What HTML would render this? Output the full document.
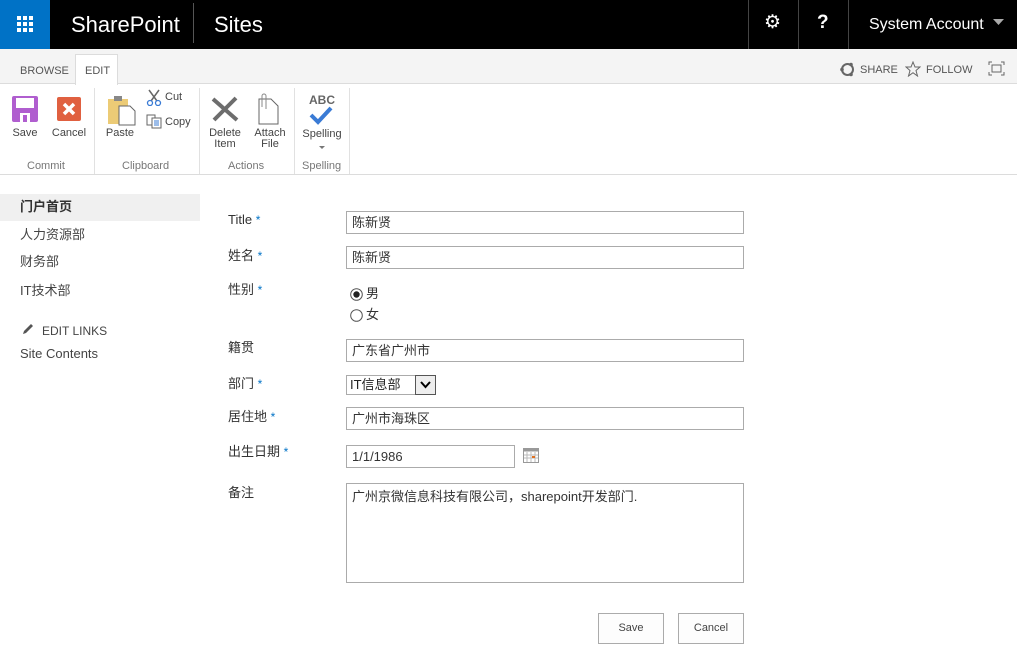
<!DOCTYPE html>
<html><head><meta charset="utf-8"><style>
*{margin:0;padding:0;box-sizing:border-box}
body{width:1017px;height:657px;position:relative;overflow:hidden;background:#fff;font-family:"Liberation Sans","Noto Sans CJK SC",sans-serif;color:#444;font-size:13px}
.a{position:absolute;white-space:nowrap}
.top{position:absolute;left:0;top:0;width:1017px;height:49px;background:#000}
.wf{position:absolute;left:0;top:0;width:50px;height:49px;background:#0072c6}
.vd{position:absolute;top:0;width:1px;height:49px;background:#444}
.lbl{position:absolute;left:228px;font-size:13px;line-height:16px;color:#333}
.lbl b{color:#0072c6;font-weight:normal;font-size:12px}
.inp{position:absolute;left:346px;width:398px;height:23px;border:1px solid #ababab;padding:2px 5px;font-size:13px;line-height:17px;color:#333}
.rl{position:absolute;font-size:11px;color:#444;text-align:center;line-height:11px}
.gl{position:absolute;top:160px;font-size:11px;color:#777}
.sep{position:absolute;top:88px;width:1px;height:86px;background:#e1e1e1}
.btn{position:absolute;top:613px;height:31px;border:1px solid #ababab;background:#fdfdfd;font-size:11px;color:#444;text-align:center;line-height:29px}
.nav{position:absolute;left:20px;font-size:13px;line-height:16px;color:#444}
</style></head><body>
<div class="top"></div>
<div class="wf"></div>
<svg class="a" style="left:17px;top:16px" width="16" height="16"><g fill="#fff">
<rect x="0" y="0" width="4" height="4"/><rect x="6" y="0" width="4" height="4"/><rect x="12" y="0" width="4" height="4"/>
<rect x="0" y="6" width="4" height="4"/><rect x="6" y="6" width="4" height="4"/><rect x="12" y="6" width="4" height="4"/>
<rect x="0" y="12" width="4" height="4"/><rect x="6" y="12" width="4" height="4"/><rect x="12" y="12" width="4" height="4"/></g></svg>
<div class="a" style="left:71px;top:12px;font-size:22px;color:#fff">SharePoint</div>
<div class="a" style="left:193px;top:3px;width:1px;height:40px;background:#555"></div>
<div class="a" style="left:214px;top:12px;font-size:22px;color:#fff">Sites</div>
<div class="vd" style="left:748px"></div><div class="vd" style="left:798px"></div><div class="vd" style="left:848px"></div>
<div class="a" style="left:764px;top:11px;font-size:19px;color:#fff">⚙</div>
<div class="a" style="left:817px;top:12px;font-size:19px;color:#fff;font-weight:bold">?</div>
<div class="a" style="left:869px;top:16px;font-size:16px;color:#fff">System Account</div>
<svg class="a" style="left:993px;top:19px" width="11" height="6"><path d="M0 0H11L5.5 6Z" fill="#aaa"/></svg>

<div class="a" style="left:0;top:49px;width:1017px;height:35px;background:#f4f4f4;border-bottom:1px solid #dcdcdc"></div>
<div class="a" style="left:75px;top:54px;width:43px;height:31px;background:#fff;border:1px solid #dcdcdc;border-bottom:none"></div>
<div class="a" style="left:20px;top:65px;font-size:11px;color:#555">BROWSE</div>
<div class="a" style="left:85px;top:65px;font-size:11px;color:#555">EDIT</div>
<svg class="a" style="left:840px;top:62px" width="15" height="15"><circle cx="7.5" cy="7.5" r="5.5" fill="none" stroke="#666" stroke-width="2"/><circle cx="2" cy="7.5" r="1.8" fill="#666"/><circle cx="11" cy="2.5" r="1.8" fill="#666"/><circle cx="11" cy="12.5" r="1.8" fill="#666"/></svg>
<div class="a" style="left:860px;top:64px;font-size:11px;color:#555">SHARE</div>
<svg class="a" style="left:905px;top:61px" width="16" height="16"><path d="M8 1L10 6H15L11 9.5L12.5 15L8 11.7L3.5 15L5 9.5L1 6H6Z" fill="none" stroke="#666"/></svg>
<div class="a" style="left:926px;top:64px;font-size:11px;color:#555">FOLLOW</div>
<svg class="a" style="left:988px;top:61px" width="17" height="15"><path d="M1 4V1H4M13 1H16V4M16 11V14H13M4 14H1V11" fill="none" stroke="#666"/><rect x="4" y="4" width="9" height="7" fill="none" stroke="#666"/></svg>

<div class="a" style="left:0;top:174px;width:1017px;height:1px;background:#dcdcdc"></div>
<svg class="a" style="left:12px;top:96px" width="26" height="26"><rect width="26" height="26" rx="2" fill="#b05ecf"/><rect x="4" y="2" width="18" height="10" fill="#fff"/><rect x="8" y="17" width="10" height="9" fill="#fff"/><rect x="11" y="19" width="4" height="7" fill="#b05ecf"/></svg>
<div class="rl" style="left:10px;top:128px;width:30px">Save</div>
<svg class="a" style="left:57px;top:97px" width="24" height="24"><rect width="24" height="24" rx="2" fill="#e06040"/><path d="M7 7L17 17M17 7L7 17" stroke="#fff" stroke-width="3.5"/></svg>
<div class="rl" style="left:50px;top:128px;width:38px">Cancel</div>
<div class="sep" style="left:94px"></div>
<svg class="a" style="left:107px;top:94px" width="30" height="32"><rect x="1" y="5" width="20" height="25" fill="#eccb76"/><rect x="7" y="2" width="8" height="5" fill="#888"/><path d="M12 12H23L28 17V31H12Z" fill="#fff" stroke="#666"/></svg>
<div class="rl" style="left:104px;top:128px;width:32px">Paste</div>
<svg class="a" style="left:146px;top:89px" width="16" height="17"><path d="M3 1L11 12M13 1L5 12" stroke="#666" stroke-width="1.5"/><circle cx="4" cy="14" r="2.5" fill="none" stroke="#3a7bd5" stroke-width="1.3"/><circle cx="12" cy="14" r="2.5" fill="none" stroke="#3a7bd5" stroke-width="1.3"/></svg>
<div class="a" style="left:165px;top:91px;font-size:11px">Cut</div>
<svg class="a" style="left:146px;top:114px" width="16" height="15"><rect x="1" y="1" width="8" height="10" fill="#fff" stroke="#666"/><rect x="6" y="4" width="9" height="10" fill="#fff" stroke="#666"/><path d="M8 7H13M8 9H13M8 11H13" stroke="#3a7bd5"/></svg>
<div class="a" style="left:165px;top:116px;font-size:11px">Copy</div>
<div class="sep" style="left:199px"></div>
<svg class="a" style="left:210px;top:96px" width="30" height="26"><path d="M3 3L27 24M26 2L4 24" stroke="#6d6d6d" stroke-width="4"/></svg>
<div class="rl" style="left:205px;top:128px;width:40px">Delete<br>Item</div>
<svg class="a" style="left:256px;top:93px" width="24" height="32"><path d="M3 6H15L22 13V31H3Z" fill="#fff" stroke="#666"/><path d="M6 14V3A2 2 0 0 1 10 3V16" fill="none" stroke="#888"/></svg>
<div class="rl" style="left:250px;top:128px;width:40px">Attach<br>File</div>
<div class="sep" style="left:294px"></div>
<div class="a" style="left:309px;top:93px;font-size:12px;font-weight:bold;color:#666">ABC</div>
<svg class="a" style="left:309px;top:105px" width="24" height="20"><path d="M2 10L9 17L22 3" fill="none" stroke="#3a7bd5" stroke-width="4"/></svg>
<div class="rl" style="left:300px;top:129px;width:44px">Spelling</div>
<svg class="a" style="left:319px;top:146px" width="6" height="4"><path d="M0 0H6L3 3Z" fill="#777"/></svg>
<div class="sep" style="left:349px"></div>
<div class="gl" style="left:27px">Commit</div>
<div class="gl" style="left:122px">Clipboard</div>
<div class="gl" style="left:228px">Actions</div>
<div class="gl" style="left:302px">Spelling</div>

<div class="a" style="left:0;top:194px;width:200px;height:27px;background:#f0f0f0"></div>
<div class="nav" style="top:199px;font-weight:bold;color:#333">门户首页</div>
<div class="nav" style="top:227px">人力资源部</div>
<div class="nav" style="top:254px">财务部</div>
<div class="nav" style="top:283px">IT技术部</div>
<svg class="a" style="left:22px;top:323px" width="12" height="12"><path d="M1 11L2 8L9 1L11 3L4 10Z" fill="#555"/></svg>
<div class="nav" style="left:42px;top:323px;font-size:12px">EDIT LINKS</div>
<div class="nav" style="top:346px">Site Contents</div>

<div class="lbl" style="top:212px">Title <b>*</b></div>
<div class="inp" style="top:211px">陈新贤</div>
<div class="lbl" style="top:248px">姓名 <b>*</b></div>
<div class="inp" style="top:246px">陈新贤</div>
<div class="lbl" style="top:282px">性别 <b>*</b></div>
<svg class="a" style="left:350px;top:288px" width="13" height="13"><circle cx="6.5" cy="6.5" r="5.8" fill="#fff" stroke="#555"/><circle cx="6.5" cy="6.5" r="3.2" fill="#222"/></svg>
<div class="a" style="left:366px;top:286px;line-height:16px;color:#333">男</div>
<svg class="a" style="left:350px;top:309px" width="13" height="13"><circle cx="6.5" cy="6.5" r="5.8" fill="#fff" stroke="#555"/></svg>
<div class="a" style="left:366px;top:307px;line-height:16px;color:#333">女</div>
<div class="lbl" style="top:340px">籍贯</div>
<div class="inp" style="top:339px">广东省广州市</div>
<div class="lbl" style="top:376px">部门 <b>*</b></div>
<div class="a" style="left:346px;top:375px;width:90px;height:20px;border:1px solid #ababab;font-size:13px;line-height:16px;color:#222;padding:1px 3px">IT信息部</div>
<div class="a" style="left:415px;top:375px;width:21px;height:20px;border:1px solid #555;background:#eee"></div>
<svg class="a" style="left:420px;top:381px" width="11" height="8"><path d="M1 1L5.5 6L10 1" fill="none" stroke="#000" stroke-width="2"/></svg>
<div class="lbl" style="top:409px">居住地 <b>*</b></div>
<div class="inp" style="top:407px">广州市海珠区</div>
<div class="lbl" style="top:444px">出生日期 <b>*</b></div>
<div class="inp" style="top:445px;width:169px">1/1/1986</div>
<svg class="a" style="left:523px;top:448px" width="16" height="15"><rect x="0.5" y="0.5" width="15" height="14" fill="#fff" stroke="#999"/><rect x="0.5" y="0.5" width="15" height="3" fill="#999"/><path d="M4 4V14M8 4V14M12 4V14M1 7H15M1 10H15" stroke="#bbb"/><rect x="9" y="8" width="3" height="2" fill="#e07020"/></svg>
<div class="lbl" style="top:485px">备注</div>
<div class="inp" style="top:483px;height:100px;padding-top:4px">广州京微信息科技有限公司，sharepoint开发部门.</div>
<div class="btn" style="left:598px;width:66px">Save</div>
<div class="btn" style="left:678px;width:66px">Cancel</div>
</body></html>
